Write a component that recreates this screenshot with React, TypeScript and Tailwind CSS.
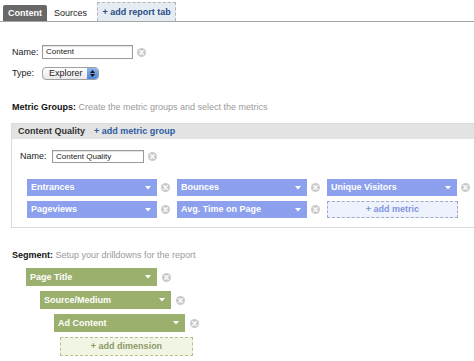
import React from "react";

function XCircle({ className = "" }: { className?: string }) {
  return (
    <svg width="9" height="9" viewBox="0 0 9 9" className={className}>
      <circle cx="4.5" cy="4.5" r="4.5" fill="#cbcbcb" />
      <path d="M2.8 2.8 L6.2 6.2 M6.2 2.8 L2.8 6.2" stroke="#fff" strokeWidth="1.3" strokeLinecap="round" />
    </svg>
  );
}

function Caret() {
  return (
    <svg width="6" height="4" viewBox="0 0 6 4" className="ml-auto mr-[6px]">
      <path d="M0 0 L6 0 L3 3.5 Z" fill="#fff" />
    </svg>
  );
}

function BlueBox({ label }: { label: string }) {
  return (
    <div className="flex items-center gap-[4px]">
      <div className="w-[130px] h-[17px] bg-[#8ca0ee] text-white font-bold flex items-center pl-[4px]">
        {label}
        <Caret />
      </div>
      <XCircle />
    </div>
  );
}

function GreenBox({ label }: { label: string }) {
  return (
    <div className="flex items-center gap-[5px]">
      <div className="w-[131px] h-[18px] bg-[#9bb06c] text-white font-bold flex items-center pl-[4px]">
        {label}
        <Caret />
      </div>
      <XCircle />
    </div>
  );
}

export default function App() {
  return (
    <div className="w-[474px] h-[361px] bg-white overflow-hidden text-[9px] text-[#222] font-['Liberation_Sans',Arial,sans-serif] leading-none">
      {/* Tabs */}
      <div className="h-[22px] border-b border-[#a5a5a5] flex items-end pl-[3px]">
        <div className="h-[16px] w-[44px] bg-[#686868] text-white font-bold rounded-t-[2px] flex items-center justify-center">
          Content
        </div>
        <div className="ml-[7px] h-[16px] flex items-center text-[#222]">Sources</div>
        <div className="ml-[10px] h-[19px] w-[79px] border border-dashed border-b-0 border-[#b4b4b4] bg-[#e6ecf4] text-[#2a4c85] font-bold flex items-center justify-center">
          + add report tab
        </div>
      </div>

      {/* Name / Type */}
      <div className="pl-[12px]">
        <div className="mt-[23px] h-[14px] flex items-center">
          <span className="w-[30px]">Name:</span>
          <div className="w-[91px] h-[14px] border border-[#9a9a9a] text-[8px] flex items-center pl-[3px] shadow-[inset_0_1px_1px_rgba(0,0,0,0.12)]">
            Content
          </div>
          <XCircle className="ml-[4px]" />
        </div>
        <div className="mt-[7px] h-[14px] flex items-center">
          <span className="w-[30px]">Type:</span>
          <div className="w-[57px] h-[13px] border border-[#a0a0a0] rounded-[4px] flex items-center pl-[6px] bg-gradient-to-b from-white to-[#e9e9e9] overflow-hidden">
            Explorer
            <div className="ml-auto w-[11px] h-full bg-gradient-to-b from-[#8fb4ec] to-[#4f86d8] rounded-r-[3px] flex flex-col items-center justify-center gap-[1px]">
              <svg width="5" height="3" viewBox="0 0 5 3"><path d="M0 3 L5 3 L2.5 0 Z" fill="#111" /></svg>
              <svg width="5" height="3" viewBox="0 0 5 3"><path d="M0 0 L5 0 L2.5 3 Z" fill="#111" /></svg>
            </div>
          </div>
        </div>

        {/* Metric Groups */}
        <div className="mt-[23px]">
          <span className="font-bold text-[#111]">Metric Groups:</span>{" "}
          <span className="text-[#9a9a9a]">Create the metric groups and select the metrics</span>
        </div>
      </div>

      <div className="ml-[11px] mt-[11px] border border-r-0 border-[#dadada] w-[480px] h-[105px]">
        <div className="h-[15px] bg-[#e3e3e3] flex items-center pl-[6px]">
          <span className="font-bold text-[#333]">Content Quality</span>
          <span className="ml-[9px] font-bold text-[#2d5ba3]">+ add metric group</span>
        </div>
        <div className="mt-[11px] pl-[8px] h-[13px] flex items-center">
          <span className="w-[32px]">Name:</span>
          <div className="w-[92px] h-[13px] border border-[#9a9a9a] text-[8px] flex items-center pl-[3px] shadow-[inset_0_1px_1px_rgba(0,0,0,0.12)]">
            Content Quality
          </div>
          <XCircle className="ml-[4px]" />
        </div>
        <div className="mt-[16px] pl-[15px] grid grid-cols-[150px_150px_150px] gap-y-[5px]">
          <BlueBox label="Entrances" />
          <BlueBox label="Bounces" />
          <BlueBox label="Unique Visitors" />
          <BlueBox label="Pageviews" />
          <BlueBox label="Avg. Time on Page" />
          <div className="w-[131px] h-[17px] border border-dashed border-[#9fa8c8] bg-[#eef2fc] text-[#7f95df] font-bold flex items-center justify-center">
            + add metric
          </div>
        </div>
      </div>

      {/* Segment */}
      <div className="pl-[12px] mt-[23px]">
        <span className="font-bold text-[#111]">Segment:</span>{" "}
        <span className="text-[#9a9a9a]">Setup your drilldowns for the report</span>
      </div>
      <div className="mt-[8px] flex flex-col gap-[5px]">
        <div className="pl-[26px]"><GreenBox label="Page Title" /></div>
        <div className="pl-[40px]"><GreenBox label="Source/Medium" /></div>
        <div className="pl-[54px]"><GreenBox label="Ad Content" /></div>
        <div className="pl-[60px]">
          <div className="w-[133px] h-[19px] border border-dashed border-[#b4c092] bg-[#f1f5e4] text-[#8a9a67] font-bold flex items-center justify-center">
            + add dimension
          </div>
        </div>
      </div>
    </div>
  );
}
